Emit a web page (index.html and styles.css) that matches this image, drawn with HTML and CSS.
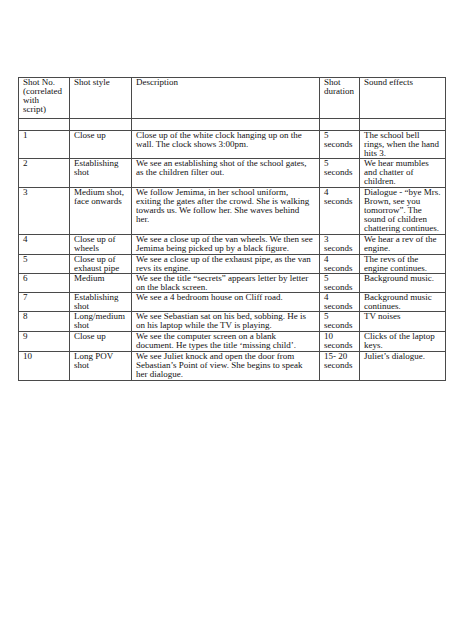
FILE: index.html
```
<!DOCTYPE html>
<html>
<head>
<meta charset="utf-8">
<link rel="stylesheet" href="styles.css">
</head>
<body>
<div class="page">
<table class="shots">
<colgroup>
<col class="c-no"><col class="c-style"><col class="c-desc"><col class="c-dur"><col class="c-sound">
</colgroup>
<tr class="r-head">
<td>Shot No.<br>(correlated<br>with<br>script)</td>
<td>Shot style</td>
<td>Description</td>
<td>Shot<br>duration</td>
<td>Sound effects</td>
</tr>
<tr class="r-empty"><td></td><td></td><td></td><td></td><td></td></tr>
<tr class="r-1">
<td>1</td>
<td>Close up</td>
<td>Close up of the white clock hanging up on the<br>wall. The clock shows 3:00pm.</td>
<td>5<br>seconds</td>
<td>The school bell<br>rings, when the hand<br>hits 3.</td>
</tr>
<tr class="r-2">
<td>2</td>
<td>Establishing<br>shot</td>
<td>We see an establishing shot of the school gates,<br>as the children filter out.</td>
<td>5<br>seconds</td>
<td>We hear mumbles<br>and chatter of<br>children.</td>
</tr>
<tr class="r-3">
<td>3</td>
<td>Medium shot,<br>face onwards</td>
<td>We follow Jemima, in her school uniform,<br>exiting the gates after the crowd. She is walking<br>towards us. We follow her. She waves behind<br>her.</td>
<td>4<br>seconds</td>
<td>Dialogue - “bye Mrs.<br>Brown, see you<br>tomorrow”. The<br>sound of children<br>chattering continues.</td>
</tr>
<tr class="r-4">
<td>4</td>
<td>Close up of<br>wheels</td>
<td>We see a close up of the van wheels. We then see<br>Jemima being picked up by a black figure.</td>
<td>3<br>seconds</td>
<td>We hear a rev of the<br>engine.</td>
</tr>
<tr class="r-5">
<td>5</td>
<td>Close up of<br>exhaust pipe</td>
<td>We see a close up of the exhaust pipe, as the van<br>revs its engine.</td>
<td>4<br>seconds</td>
<td>The revs of the<br>engine continues.</td>
</tr>
<tr class="r-6">
<td>6</td>
<td>Medium</td>
<td>We see the title “secrets” appears letter by letter<br>on the black screen.</td>
<td>5<br>seconds</td>
<td>Background music.</td>
</tr>
<tr class="r-7">
<td>7</td>
<td>Establishing<br>shot</td>
<td>We see a 4 bedroom house on Cliff road.</td>
<td>4<br>seconds</td>
<td>Background music<br>continues.</td>
</tr>
<tr class="r-8">
<td>8</td>
<td>Long/medium<br>shot</td>
<td>We see Sebastian sat on his bed, sobbing. He is<br>on his laptop while the TV is playing.</td>
<td>5<br>seconds</td>
<td>TV noises</td>
</tr>
<tr class="r-9">
<td>9</td>
<td>Close up</td>
<td>We see the computer screen on a blank<br>document. He types the title ‘missing child’.</td>
<td>10<br>seconds</td>
<td>Clicks of the laptop<br>keys.</td>
</tr>
<tr class="r-10">
<td>10</td>
<td>Long POV<br>shot</td>
<td>We see Juliet knock and open the door from<br>Sebastian’s Point of view. She begins to speak<br>her dialogue.</td>
<td>15- 20<br>seconds</td>
<td>Juliet’s dialogue.</td>
</tr>
</table>
</div>
</body>
</html>
```
FILE: styles.css
```
html, body {
  margin: 0;
  padding: 0;
  background: #ffffff;
}
.page {
  padding: 77px 0 0 18px;
}
.shots {
  border-collapse: collapse;
  table-layout: fixed;
  width: 427px;
  font-family: "Liberation Serif", "Times New Roman", serif;
  font-size: 9px;
  line-height: 9px;
  color: #111111;
}
.c-no { width: 51px; }
.c-style { width: 62px; }
.c-desc { width: 188px; }
.c-dur { width: 40px; }
.c-sound { width: 86px; }
.shots td {
  border: 1px solid #4a4a4a;
  vertical-align: top;
  padding: 0 0 0 4px;
  white-space: nowrap;
  overflow: hidden;
}
.r-head { height: 41px; }
.r-empty { height: 12px; }
.r-1 { height: 27px; }
.r-2 { height: 29px; }
.r-3 { height: 47px; }
.r-4 { height: 20px; }
.r-5 { height: 18px; }
.r-6 { height: 19px; }
.r-7 { height: 18px; }
.r-8 { height: 20px; }
.r-9 { height: 20px; }
.r-10 { height: 29px; }
```
